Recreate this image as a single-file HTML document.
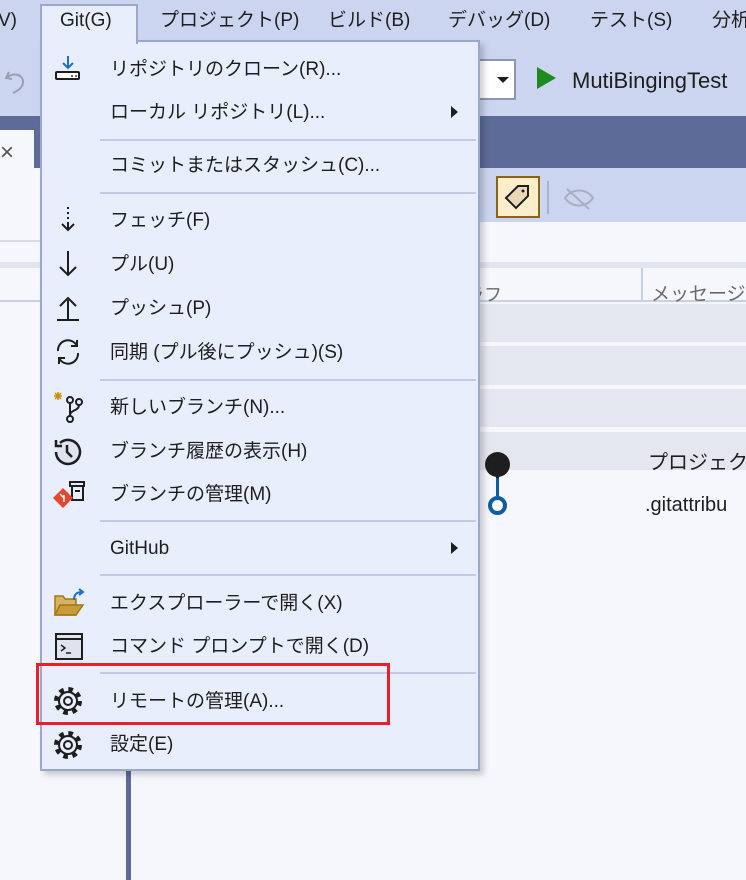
<!DOCTYPE html>
<html><head><meta charset="utf-8"><style>
*{margin:0;padding:0;box-sizing:border-box}
body{width:746px;height:880px;overflow:hidden;position:relative;background:#f5f7fd;font-family:"Liberation Sans","Noto Sans CJK JP",sans-serif;color:#1e1e1e}
.a{position:absolute}
.t{position:absolute;font-size:19px;white-space:nowrap;line-height:24px}
.sep{position:absolute;left:100px;width:376px;height:2px;background:#c3cbe4}
</style></head><body>
<div class="a" style="left:0;top:0;width:746px;height:116px;background:#ccd5f0"></div>
<div class="t" style="left:-2px;top:9px">V)</div>
<div class="t" style="left:160px;top:9px">プロジェクト(P)</div>
<div class="t" style="left:328px;top:9px">ビルド(B)</div>
<div class="t" style="left:448px;top:9px">デバッグ(D)</div>
<div class="t" style="left:590px;top:9px">テスト(S)</div>
<div class="t" style="left:712px;top:9px">分析</div>
<svg class="a" style="left:3px;top:66px" width="26" height="30"><path d="M6 6 L3 12 L9 13 M3 12 C10 6 20 8 20 16 C20 22 14 25 10 27" fill="none" stroke="#9aa0b0" stroke-width="2"/></svg>
<div class="a" style="left:470px;top:59px;width:46px;height:41px;background:#fff;border:2px solid #8e97ad"></div>
<div class="a" style="left:497px;top:77px;border-left:6px solid transparent;border-right:6px solid transparent;border-top:6px solid #1e1e1e"></div>
<div class="a" style="left:537px;top:67px;border-top:11px solid transparent;border-bottom:11px solid transparent;border-left:19px solid #1f8a1f"></div>
<div class="t" style="left:572px;top:69px;font-size:22px">MutiBingingTest</div>
<div class="a" style="left:0;top:116px;width:746px;height:52px;background:#5d6b99"></div>
<div class="a" style="left:0;top:130px;width:34px;height:44px;background:#f5f7fd"></div>
<div class="t" style="left:0;top:141px;font-size:24px;color:#555">×</div>
<div class="a" style="left:0;top:174px;width:40px;height:48px;background:#f5f7fd"></div>
<div class="a" style="left:40px;top:168px;width:706px;height:54px;background:#ccd5f0"></div>
<div class="a" style="left:496px;top:176px;width:44px;height:42px;background:#fdeecb;border:2px solid #8a6414"></div>
<svg class="a" style="left:500px;top:180px" width="36" height="34"><path d="M6 18 L18 6 L28 6 L28 16 L16 28 Z" fill="#ead7b6" stroke="#1e1e1e" stroke-width="2"/><circle cx="23" cy="11" r="1.5" fill="#1e1e1e"/></svg>
<div class="a" style="left:547px;top:181px;width:2px;height:33px;background:#a8b2cc"></div>
<svg class="a" style="left:562px;top:186px" width="34" height="26"><path d="M3 12 C10 2 24 2 31 12 C24 22 10 22 3 12 Z M5 3 L27 23" fill="none" stroke="#a8aec0" stroke-width="2"/></svg>
<div class="a" style="left:0;top:222px;width:746px;height:40px;background:#f5f7fd"></div>
<div class="a" style="left:0;top:240px;width:40px;height:2px;background:#d6dbe8"></div>
<div class="a" style="left:0;top:262px;width:746px;height:6px;background:#e1e5f0"></div>
<div class="a" style="left:0;top:268px;width:746px;height:34px;background:#f5f7fd;border-bottom:2px solid #c8d0e6"></div>
<div class="a" style="left:641px;top:268px;width:2px;height:34px;background:#c8d0e6"></div>
<div class="t" style="left:466px;top:283px;font-size:18px;color:#6a6a6a">ラフ</div>
<div class="t" style="left:651px;top:283px;font-size:19px;color:#6a6a6a">メッセージ</div>
<div class="a" style="left:40px;top:304px;width:706px;height:38px;background:#e5e7f0"></div>
<div class="a" style="left:40px;top:346px;width:706px;height:39px;background:#e5e7f0"></div>
<div class="a" style="left:40px;top:389px;width:706px;height:38px;background:#e5e7f0"></div>
<div class="a" style="left:40px;top:432px;width:706px;height:38px;background:#e5e7f0"></div>
<div class="a" style="left:496px;top:465px;width:3px;height:30px;background:#1e1e1e"></div>
<div class="a" style="left:496px;top:478px;width:3px;height:18px;background:#0e5ca3"></div>
<div class="a" style="left:485px;top:452px;width:25px;height:25px;border-radius:50%;background:#1e1e1e"></div>
<div class="a" style="left:488px;top:496px;width:19px;height:19px;border-radius:50%;border:4px solid #0e5ca3;background:#fff"></div>
<div class="t" style="left:648px;top:451px;font-size:20px">プロジェクト</div>
<div class="t" style="left:645px;top:493px;font-size:20px">.gitattribu</div>
<div class="a" style="left:126px;top:770px;width:5px;height:110px;background:#5d6b99"></div>
<div class="a" style="left:44px;top:44px;width:440px;height:731px;background:rgba(0,0,0,0.18);filter:blur(3px)"></div>
<div class="a" style="left:40px;top:40px;width:440px;height:731px;background:#e9eefc;border:2px solid #9aa8cc"></div>
<div class="a" style="left:40px;top:4px;width:98px;height:40px;background:#e9eefc;border:2px solid #9aa8cc;border-bottom:none"></div>
<div class="t" style="left:60px;top:9px">Git(G)</div>
<div class="t" style="left:110px;top:58px">リポジトリのクローン(R)...</div>
<div class="t" style="left:110px;top:101px">ローカル リポジトリ(L)...</div>
<div class="a" style="left:451px;top:106px;border-top:6px solid transparent;border-bottom:6px solid transparent;border-left:7px solid #1e1e1e"></div>
<div class="sep" style="top:139px"></div>
<div class="t" style="left:110px;top:154px">コミットまたはスタッシュ(C)...</div>
<div class="sep" style="top:192px"></div>
<div class="t" style="left:110px;top:209px">フェッチ(F)</div>
<div class="t" style="left:110px;top:253px">プル(U)</div>
<div class="t" style="left:110px;top:297px">プッシュ(P)</div>
<div class="t" style="left:110px;top:341px">同期 (プル後にプッシュ)(S)</div>
<div class="sep" style="top:379px"></div>
<div class="t" style="left:110px;top:396px">新しいブランチ(N)...</div>
<div class="t" style="left:110px;top:440px">ブランチ履歴の表示(H)</div>
<div class="t" style="left:110px;top:483px">ブランチの管理(M)</div>
<div class="sep" style="top:520px"></div>
<div class="t" style="left:110px;top:537px">GitHub</div>
<div class="a" style="left:451px;top:542px;border-top:6px solid transparent;border-bottom:6px solid transparent;border-left:7px solid #1e1e1e"></div>
<div class="sep" style="top:574px"></div>
<div class="t" style="left:110px;top:592px">エクスプローラーで開く(X)</div>
<div class="t" style="left:110px;top:635px">コマンド プロンプトで開く(D)</div>
<div class="sep" style="top:672px"></div>
<div class="t" style="left:110px;top:690px">リモートの管理(A)...</div>
<div class="t" style="left:110px;top:733px">設定(E)</div>
<div class="a" style="left:36px;top:663px;width:354px;height:62px;border:3px solid #e8202a"></div>
<svg class="a" style="left:52px;top:52px" width="32" height="32"><path d="M16 4 V16 M11 11 L16 16 L21 11" fill="none" stroke="#1a72c4" stroke-width="2"/><rect x="4" y="20" width="23" height="7" rx="1" fill="#fff" stroke="#1e1e1e" stroke-width="2"/><circle cx="20" cy="24" r="0.9"/><circle cx="24" cy="24" r="0.9"/></svg>
<svg class="a" style="left:52px;top:204px" width="32" height="32"><path d="M16 3 V5 M16 8 V10 M16 13 V15 M16 18 V26 M10 20 L16 26 L22 20" fill="none" stroke="#1e1e1e" stroke-width="2"/></svg>
<svg class="a" style="left:52px;top:248px" width="32" height="32"><path d="M16 3 V27 M8 19 L16 27 L24 19" fill="none" stroke="#1e1e1e" stroke-width="2"/></svg>
<svg class="a" style="left:52px;top:292px" width="32" height="32"><path d="M16 28 V8 M8 14 L16 6 L24 14 M5 28 H27" fill="none" stroke="#1e1e1e" stroke-width="2"/></svg>
<svg class="a" style="left:52px;top:336px" width="32" height="32"><path d="M6 15 A10 10 0 0 1 25 10 M25 4 V10 H19 M26 17 A10 10 0 0 1 7 22 M7 28 V22 H13" fill="none" stroke="#1e1e1e" stroke-width="2"/></svg>
<svg class="a" style="left:52px;top:390px" width="32" height="36"><path d="M6 2 V10 M2 6 H10 M3 3 L9 9 M9 3 L3 9" stroke="#c98f00" stroke-width="1.5"/><circle cx="18" cy="10" r="3" fill="none" stroke="#1e1e1e" stroke-width="2"/><circle cx="27" cy="12" r="3" fill="none" stroke="#1e1e1e" stroke-width="2"/><circle cx="18" cy="29" r="3" fill="none" stroke="#1e1e1e" stroke-width="2"/><path d="M18 13 V26 M27 15 C27 21 18 20 18 25" fill="none" stroke="#1e1e1e" stroke-width="2"/></svg>
<svg class="a" style="left:52px;top:436px" width="32" height="32"><path d="M4 16 A12 12 0 1 0 8 7" fill="#dfe3ee" stroke="#1e1e1e" stroke-width="2.5"/><path d="M4 4 V10 H10 M15 9 V16 L20 21" fill="none" stroke="#1e1e1e" stroke-width="2.5"/></svg>
<svg class="a" style="left:52px;top:478px" width="34" height="34"><rect x="18" y="4" width="14" height="4" fill="none" stroke="#1e1e1e" stroke-width="2"/><path d="M20 8 V22 H31 V8" fill="none" stroke="#1e1e1e" stroke-width="2"/><path d="M23 13 H28" stroke="#1e1e1e" stroke-width="2"/><path d="M1 20 L11 10 L21 20 L11 30 Z" fill="#e4472b"/><path d="M8 16 L12 20 M12 17 V24" stroke="#fff" stroke-width="1.5"/></svg>
<svg class="a" style="left:52px;top:586px" width="34" height="34"><path d="M3 10 H11 L13 13 H24 V29 H3 Z" fill="#d6b362" stroke="#a3780c" stroke-width="1.5"/><path d="M3 29 L8 19 H31 L24 29 Z" fill="#c99b3c" stroke="#a3780c" stroke-width="1.5"/><path d="M22 14 C22 8 25 6 30 6 M27 3 L31 6 L27 9" fill="none" stroke="#1a72c4" stroke-width="2"/></svg>
<svg class="a" style="left:52px;top:630px" width="34" height="34"><rect x="4" y="4" width="26" height="25" fill="#dfe3ee" stroke="#1e1e1e" stroke-width="2"/><path d="M4 9 H30" stroke="#1e1e1e" stroke-width="2"/><path d="M9 15 L13 18 L9 21 M14 23 H19" fill="none" stroke="#1e1e1e" stroke-width="1.5"/></svg>
<svg class="a" style="left:52px;top:685px" width="32" height="32" viewBox="0 0 32 32"><circle cx="16" cy="16" r="11.5" fill="none" stroke="#1e1e1e" stroke-width="5" stroke-dasharray="4.5 4.53"/><circle cx="16" cy="16" r="9" fill="#e9eefc" stroke="#1e1e1e" stroke-width="2"/><circle cx="16" cy="16" r="4" fill="none" stroke="#1e1e1e" stroke-width="2"/></svg>
<svg class="a" style="left:52px;top:729px" width="32" height="32" viewBox="0 0 32 32"><circle cx="16" cy="16" r="11.5" fill="none" stroke="#1e1e1e" stroke-width="5" stroke-dasharray="4.5 4.53"/><circle cx="16" cy="16" r="9" fill="#e9eefc" stroke="#1e1e1e" stroke-width="2"/><circle cx="16" cy="16" r="4" fill="none" stroke="#1e1e1e" stroke-width="2"/></svg>
</body></html>
